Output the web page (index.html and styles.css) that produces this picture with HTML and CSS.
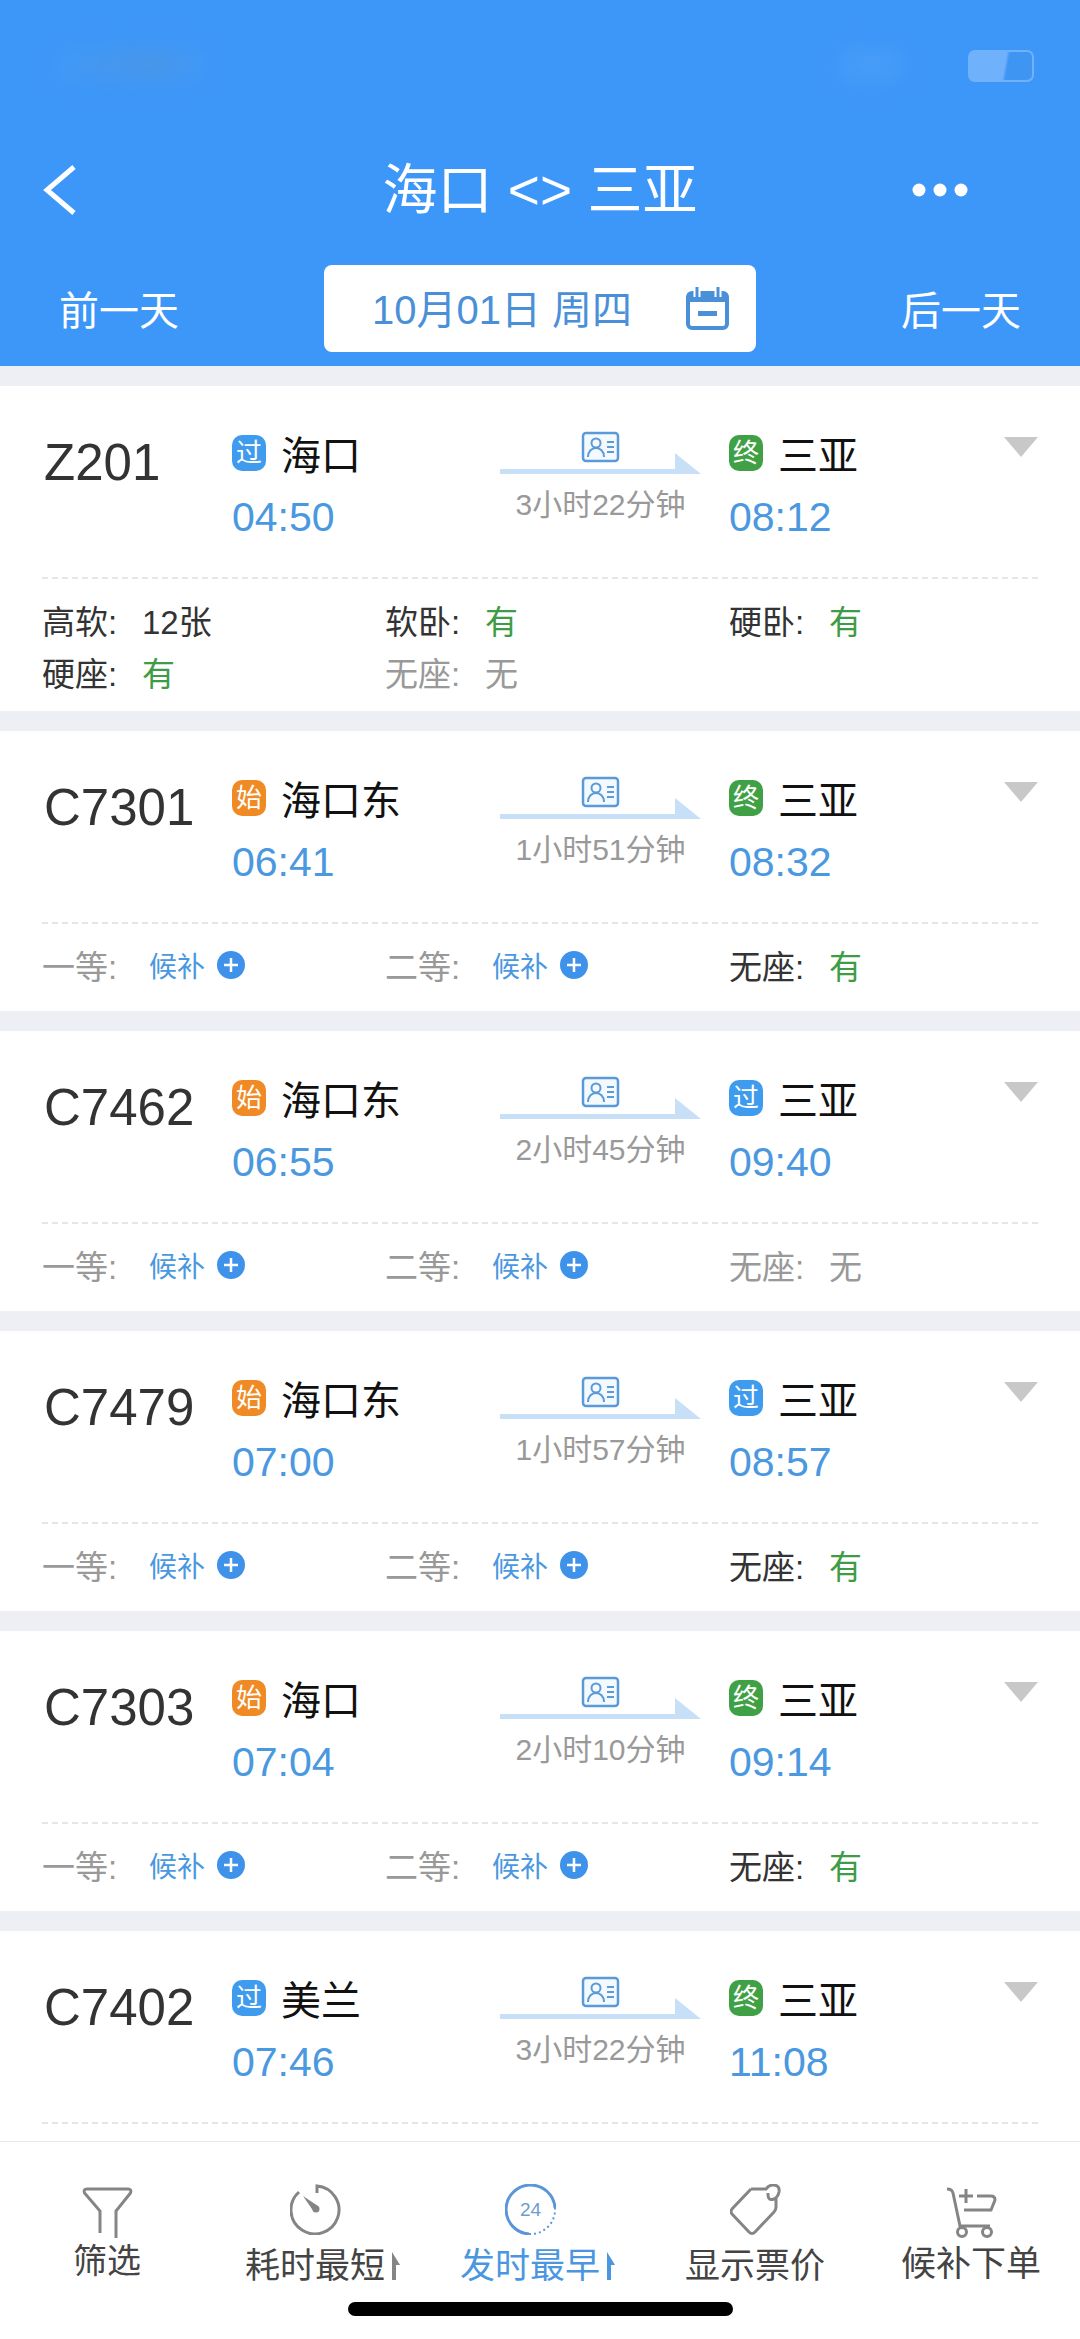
FILE: index.html
```html
<!DOCTYPE html>
<html lang="zh-CN">
<head>
  <meta charset="UTF-8">
  <meta name="viewport" content="width=device-width, initial-scale=1.0">
  <title>海口 &lt;&gt; 三亚</title>
  <link rel="stylesheet" href="styles.css">
</head>
<body>
  <!-- shared icons -->
  <svg class="icon-defs" aria-hidden="true">
    <symbol id="route" viewBox="0 0 201 44">
      <polygon points="0,38 175,38 175,22 201,43 0,43" fill="#c7e0f8"/>
      <rect x="83" y="2" width="35" height="28" rx="3" fill="#f4f9fe" stroke="#5a9ad8" stroke-width="2.5"/>
      <circle cx="96" cy="12" r="4.5" fill="none" stroke="#5a9ad8" stroke-width="2"/>
      <path d="M88 26c0-6 4-9 8-9s8 3 8 9" fill="none" stroke="#5a9ad8" stroke-width="2"/>
      <path d="M107 11h7M107 16h7M107 21h7" stroke="#5a9ad8" stroke-width="2"/>
    </symbol>
    <symbol id="plus" viewBox="0 0 28 28">
      <circle cx="14" cy="14" r="14" fill="#3f92ea"/>
      <path d="M14 7v14M7 14h14" stroke="#fff" stroke-width="2.5"/>
    </symbol>
    <symbol id="up" viewBox="0 0 8 28">
      <polygon points="0,0 8,13 4,13 4,28 0,28" fill="currentColor"/>
    </symbol>
  </svg>

  <header class="header">
    <div class="status-bar">
      <div class="status-blob status-left"></div>
      <div class="status-right">
        <div class="status-blob status-signal"></div>
        <div class="status-battery"></div>
      </div>
    </div>
    <div class="title-row">
      <svg class="back" viewBox="0 0 34 50" width="34" height="50">
        <path d="M31 2L4 25l27 23" fill="none" stroke="#fff" stroke-width="5"/>
      </svg>
      <h1 class="title">海口 &lt;&gt; 三亚</h1>
      <svg class="more" viewBox="0 0 56 14" width="56" height="14">
        <circle cx="7" cy="7" r="6.5" fill="#fff"/>
        <circle cx="28" cy="7" r="6.5" fill="#fff"/>
        <circle cx="49" cy="7" r="6.5" fill="#fff"/>
      </svg>
    </div>
    <div class="date-row">
      <span class="day-link">前一天</span>
      <div class="date-box">
        <span class="date-text">10月01日 周四</span>
        <svg class="calendar" viewBox="0 0 43 43" width="43" height="43">
          <rect x="2" y="6" width="39" height="35" rx="4" fill="none" stroke="#4a90d9" stroke-width="4"/>
          <rect x="2" y="6" width="39" height="9" fill="#4a90d9"/>
          <path d="M11 0v10M32 0v10" stroke="#fff" stroke-width="7"/>
          <path d="M11 0v10M32 0v10" stroke="#4a90d9" stroke-width="3"/>
          <rect x="12" y="24" width="19" height="5" fill="#4a90d9"/>
        </svg>
      </div>
      <span class="day-link">后一天</span>
    </div>
  </header>

  <main class="train-list">
    <article class="card">
      <div class="card-top">
        <div class="train-no">Z201</div>
        <div>
          <div class="station"><span class="badge badge-pass">过</span>海口</div>
          <div class="time">04:50</div>
        </div>
        <div class="route">
          <svg class="route-icon"><use href="#route"/></svg>
          <div class="duration">3小时22分钟</div>
        </div>
        <div>
          <div class="station"><span class="badge badge-end">终</span>三亚</div>
          <div class="time">08:12</div>
        </div>
        <div class="caret"></div>
      </div>
      <div class="seats">
        <div class="seat"><span class="seat-label">高软:</span>12张</div>
        <div class="seat"><span class="seat-label">软卧:</span><span class="yes">有</span></div>
        <div class="seat"><span class="seat-label">硬卧:</span><span class="yes">有</span></div>
        <div class="seat"><span class="seat-label">硬座:</span><span class="yes">有</span></div>
        <div class="seat seat-none"><span class="seat-label">无座:</span>无</div>
      </div>
    </article>

    <article class="card">
      <div class="card-top">
        <div class="train-no">C7301</div>
        <div>
          <div class="station"><span class="badge badge-start">始</span>海口东</div>
          <div class="time">06:41</div>
        </div>
        <div class="route">
          <svg class="route-icon"><use href="#route"/></svg>
          <div class="duration">1小时51分钟</div>
        </div>
        <div>
          <div class="station"><span class="badge badge-end">终</span>三亚</div>
          <div class="time">08:32</div>
        </div>
        <div class="caret"></div>
      </div>
      <div class="seats">
        <div class="seat seat-wait"><span class="seat-label">一等:</span>候补<svg class="plus"><use href="#plus"/></svg></div>
        <div class="seat seat-wait"><span class="seat-label">二等:</span>候补<svg class="plus"><use href="#plus"/></svg></div>
        <div class="seat"><span class="seat-label">无座:</span><span class="yes">有</span></div>
      </div>
    </article>

    <article class="card">
      <div class="card-top">
        <div class="train-no">C7462</div>
        <div>
          <div class="station"><span class="badge badge-start">始</span>海口东</div>
          <div class="time">06:55</div>
        </div>
        <div class="route">
          <svg class="route-icon"><use href="#route"/></svg>
          <div class="duration">2小时45分钟</div>
        </div>
        <div>
          <div class="station"><span class="badge badge-pass">过</span>三亚</div>
          <div class="time">09:40</div>
        </div>
        <div class="caret"></div>
      </div>
      <div class="seats">
        <div class="seat seat-wait"><span class="seat-label">一等:</span>候补<svg class="plus"><use href="#plus"/></svg></div>
        <div class="seat seat-wait"><span class="seat-label">二等:</span>候补<svg class="plus"><use href="#plus"/></svg></div>
        <div class="seat seat-none"><span class="seat-label">无座:</span>无</div>
      </div>
    </article>

    <article class="card">
      <div class="card-top">
        <div class="train-no">C7479</div>
        <div>
          <div class="station"><span class="badge badge-start">始</span>海口东</div>
          <div class="time">07:00</div>
        </div>
        <div class="route">
          <svg class="route-icon"><use href="#route"/></svg>
          <div class="duration">1小时57分钟</div>
        </div>
        <div>
          <div class="station"><span class="badge badge-pass">过</span>三亚</div>
          <div class="time">08:57</div>
        </div>
        <div class="caret"></div>
      </div>
      <div class="seats">
        <div class="seat seat-wait"><span class="seat-label">一等:</span>候补<svg class="plus"><use href="#plus"/></svg></div>
        <div class="seat seat-wait"><span class="seat-label">二等:</span>候补<svg class="plus"><use href="#plus"/></svg></div>
        <div class="seat"><span class="seat-label">无座:</span><span class="yes">有</span></div>
      </div>
    </article>

    <article class="card">
      <div class="card-top">
        <div class="train-no">C7303</div>
        <div>
          <div class="station"><span class="badge badge-start">始</span>海口</div>
          <div class="time">07:04</div>
        </div>
        <div class="route">
          <svg class="route-icon"><use href="#route"/></svg>
          <div class="duration">2小时10分钟</div>
        </div>
        <div>
          <div class="station"><span class="badge badge-end">终</span>三亚</div>
          <div class="time">09:14</div>
        </div>
        <div class="caret"></div>
      </div>
      <div class="seats">
        <div class="seat seat-wait"><span class="seat-label">一等:</span>候补<svg class="plus"><use href="#plus"/></svg></div>
        <div class="seat seat-wait"><span class="seat-label">二等:</span>候补<svg class="plus"><use href="#plus"/></svg></div>
        <div class="seat"><span class="seat-label">无座:</span><span class="yes">有</span></div>
      </div>
    </article>

    <article class="card">
      <div class="card-top">
        <div class="train-no">C7402</div>
        <div>
          <div class="station"><span class="badge badge-pass">过</span>美兰</div>
          <div class="time">07:46</div>
        </div>
        <div class="route">
          <svg class="route-icon"><use href="#route"/></svg>
          <div class="duration">3小时22分钟</div>
        </div>
        <div>
          <div class="station"><span class="badge badge-end">终</span>三亚</div>
          <div class="time">11:08</div>
        </div>
        <div class="caret"></div>
      </div>
      <div class="seats"></div>
    </article>
  </main>

  <nav class="tab-bar">
    <div class="tab tab-low">
      <svg class="tab-icon" viewBox="0 0 51 51">
        <path d="M18 46V24L2.5 6Q1 2 5 2h41q4 0 2.5 4L34 24v27"/>
      </svg>
      <span class="tab-label">筛选</span>
    </div>
    <div class="tab">
      <svg class="tab-icon" viewBox="0 0 51 51">
        <path d="M27 9V2A24 24 0 1 1 9 8"/>
        <polygon class="icon-fill" points="13,12 28,22 24,28"/>
        <circle class="icon-fill" cx="26" cy="25" r="3.5"/>
      </svg>
      <span class="tab-label">耗时最短<svg class="up"><use href="#up"/></svg></span>
    </div>
    <div class="tab tab-active">
      <svg class="tab-icon" viewBox="0 0 51 51">
        <path d="M50 24A24.500 24.500 0 1 0 24 50"/>
        <path class="icon-dots" d="M24 50A24.500 24.500 0 0 0 50 24"/>
        <text class="icon-text" x="25.500" y="32">24</text>
      </svg>
      <span class="tab-label">发时最早<svg class="up"><use href="#up"/></svg></span>
    </div>
    <div class="tab">
      <svg class="tab-icon" viewBox="0 0 51 51">
        <path d="M38 11V9M21 5L2 25q-2 3 0 5l17 18q3 3 6 0l19-20q2-2 2-5v-9M21 5h15q3-4 7-4 7 0 6 7-1 5-5 7-6 2-6-4"/>
      </svg>
      <span class="tab-label">显示票价</span>
    </div>
    <div class="tab tab-low tab-cart">
      <svg class="tab-icon" viewBox="0 0 51 51">
        <path d="M1 2q5 0 6 4l7 33h30M20 2v14M13 9h14M31 9h14q4 0 4 4l-4 10H18"/>
        <circle cx="16" cy="45" r="4.500"/>
        <circle cx="41" cy="45" r="4.500"/>
      </svg>
      <span class="tab-label">候补下单</span>
    </div>
    <div class="home-bar"></div>
  </nav>
</body>
</html>
```

FILE: styles.css
```css
* {
  box-sizing: border-box;
}
body {
  font-family: "Liberation Sans", "Noto Sans CJK SC", sans-serif;
  margin: 0;
  width: 1080px;
  height: 100vh;
  background-color: #eeeff4;
  color: #333;
  display: flex;
  flex-direction: column;
  overflow: hidden;
}
.icon-defs {
  position: absolute;
  width: 0;
  height: 0;
}

/* header */
.header {
  background-color: #3d97f8;
  height: 366px;
  flex-shrink: 0;
  color: white;
}
.status-bar {
  height: 130px;
  padding: 50px 46px 0 55px;
  display: flex;
  justify-content: space-between;
}
.status-blob {
  height: 30px;
  border-radius: 10px;
  filter: blur(10px);
}
.status-left {
  width: 150px;
  background: linear-gradient(90deg, rgba(90, 165, 250, 0.2), rgba(80, 150, 220, 0.6) 65%, rgba(90, 165, 250, 0.2));
}
.status-right {
  display: flex;
  gap: 66px;
}
.status-signal {
  width: 62px;
  background-color: rgba(90, 165, 250, 0.4);
}
.status-battery {
  width: 66px;
  height: 32px;
  border: 2px solid #6fb2fb;
  border-radius: 7px;
  background: linear-gradient(100deg, #6fb2fb 55%, #3f95f2 60%);
}
.title-row {
  height: 120px;
  padding: 0 43px;
  display: grid;
  grid-template-columns: 1fr auto 1fr;
  align-items: center;
}
.title {
  margin: 0;
  font-size: 55px;
  font-weight: 400;
  line-height: 70px;
}
.more {
  justify-self: end;
  margin-right: 69px;
}
.date-row {
  margin-top: 15px;
  padding: 0 59px;
  display: flex;
  justify-content: space-between;
  align-items: center;
}
.day-link {
  padding-bottom: 2px;
  font-size: 40px;
}
.date-box {
  width: 432px;
  height: 87px;
  padding: 0 27px 0 48px;
  background-color: white;
  border-radius: 8px;
  display: flex;
  justify-content: space-between;
  align-items: center;
}
.date-text {
  padding-bottom: 4px;
  font-size: 40px;
  color: #4a90d9;
}

/* train cards */
.train-list {
  flex: 1;
  min-height: 0;
  overflow: hidden;
  padding-top: 20px;
  display: flex;
  flex-direction: column;
  gap: 20px;
}
.card {
  flex-shrink: 0;
  min-height: 280px;
  padding: 45px 42px 0;
  background-color: white;
}
.card-top {
  height: 148px;
  display: grid;
  grid-template-columns: 190px 268px 229px 1fr auto;
  border-bottom: 2px dashed #e6e6e6;
}
.train-no {
  margin: 5px 0 0 2px;
  font-size: 51px;
  line-height: 54px;
  color: #333;
}
.station {
  margin-top: 4px;
  display: flex;
  gap: 15px;
  font-size: 40px;
  line-height: 42px;
  color: #111;
}
.badge {
  width: 34px;
  height: 36px;
  border-radius: 10px;
  font-size: 26px;
  line-height: 36px;
  text-align: center;
  color: white;
}
.badge-pass {
  background-color: #3f9bee;
}
.badge-start {
  background-color: #f08a24;
}
.badge-end {
  background-color: #3fa045;
}
.time {
  margin-top: 16px;
  font-size: 41px;
  line-height: 48px;
  color: #4a98e0;
}
.route {
  width: 201px;
  text-align: center;
}
.route-icon {
  display: block;
  width: 201px;
  height: 44px;
}
.duration {
  margin-top: 14px;
  font-size: 30px;
  line-height: 32px;
  color: #999;
}
.caret {
  margin-top: 6px;
  width: 0;
  height: 0;
  border-left: 17px solid transparent;
  border-right: 17px solid transparent;
  border-top: 20px solid #c8c8c8;
}
.seats {
  padding: 15px 0 13px;
  display: grid;
  grid-template-columns: 343px 344px 1fr;
}
.seat {
  height: 52px;
  display: flex;
  align-items: center;
  font-size: 33px;
  color: #333;
}
.seat-label {
  width: 100px;
}
.seat-none {
  color: #999;
}
.yes {
  color: #3f9c46;
}
.seat-wait {
  font-size: 28px;
  color: #4a98e0;
}
.seat-wait .seat-label {
  width: 107px;
  font-size: 33px;
  color: #999;
}
.plus {
  width: 28px;
  height: 28px;
  margin-left: 12px;
}

/* bottom tabs */
.tab-bar {
  position: relative;
  flex-shrink: 0;
  height: 198px;
  padding-top: 42px;
  background-color: white;
  border-top: 1px solid #e8e8e8;
  display: grid;
  grid-template-columns: 214px 202px 228px 222px 1fr;
  align-items: start;
}
.tab {
  display: flex;
  flex-direction: column;
  align-items: center;
  color: #444;
}
.tab-icon {
  width: 51px;
  height: 51px;
  fill: none;
  stroke: #858585;
  stroke-width: 3;
}
.icon-fill {
  fill: #858585;
  stroke: none;
}
.tab-label {
  position: relative;
  margin-top: 9px;
  font-size: 35px;
  line-height: 44px;
  white-space: nowrap;
}
.tab-low {
  padding-top: 3px;
}
.tab-low .tab-label {
  margin-top: 1px;
  font-size: 34px;
}
.tab-cart {
  margin-left: -4px;
}
.tab-cart .tab-label {
  margin-top: 4px;
  font-size: 35px;
}
.up {
  position: absolute;
  left: calc(100% + 7px);
  top: 8px;
  width: 8px;
  height: 28px;
  color: #858585;
}
.tab-active {
  color: #4a97e0;
}
.tab-active .tab-icon {
  stroke: #5a96d8;
}
.tab-active .up {
  color: #4a97e0;
}
.icon-dots {
  stroke-width: 2;
  stroke-dasharray: 2 3;
}
.icon-text {
  font-size: 19px;
  text-anchor: middle;
  fill: #6f9ccc;
  stroke: none;
}
.home-bar {
  position: absolute;
  left: 348px;
  bottom: 23px;
  width: 385px;
  height: 14px;
  border-radius: 7px;
  background-color: black;
}
```
